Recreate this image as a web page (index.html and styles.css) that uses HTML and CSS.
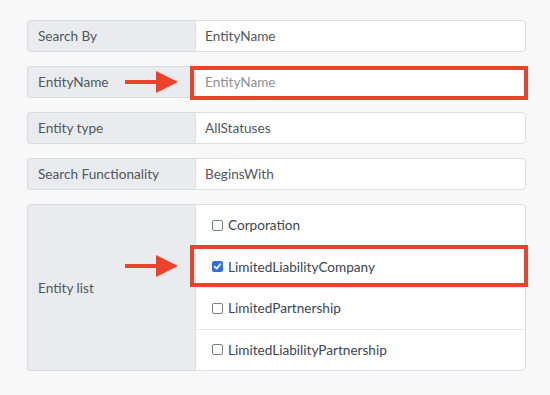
FILE: index.html
```html
<!DOCTYPE html>
<html lang="en">
<head>
  <meta charset="UTF-8" />
  <title>Entity Search</title>
  <link rel="stylesheet" href="styles.css">
</head>
<body>
  <div class="form">
    <div class="row">
      <div class="label">Search By</div>
      <div class="field">EntityName</div>
    </div>

    <div class="row">
      <div class="label">EntityName</div>
      <div class="field placeholder">EntityName</div>
      <div class="arrow arrow-name"></div>
      <div class="mark mark-name"></div>
    </div>

    <div class="row">
      <div class="label">Entity type</div>
      <div class="field">AllStatuses</div>
    </div>

    <div class="row">
      <div class="label">Search Functionality</div>
      <div class="field">BeginsWith</div>
    </div>

    <div class="row row-list">
      <div class="label">Entity list</div>
      <ul class="list">
        <li><span class="box"></span>Corporation</li>
        <li><span class="box checked"><svg viewBox="0 0 11 11" width="11" height="11"><path d="M2.6 5.6 L4.6 7.6 L8.4 3.2" fill="none" stroke="#fff" stroke-width="1.7" stroke-linecap="round" stroke-linejoin="round"/></svg></span>LimitedLiabilityCompany</li>
        <li><span class="box"></span>LimitedPartnership</li>
        <li><span class="box"></span>LimitedLiabilityPartnership</li>
      </ul>
      <div class="arrow arrow-list"></div>
      <div class="mark mark-list"></div>
    </div>
  </div>
</body>
</html>
```

FILE: styles.css
```css
body {
  margin: 0;
  background-color: #f8f8f8;
  font-family: Lato, "Open Sans", sans-serif;
  font-size: 13.6px;
  color: #51575d;
}

.form {
  width: 499px;
  margin-left: 27px;
  padding-top: 20px;
  display: flex;
  flex-direction: column;
  gap: 14px;
}

.row {
  position: relative;
  display: flex;
  height: 32px;
}

.label {
  width: 157px;
  padding-left: 10px;
  display: flex;
  align-items: center;
  background-color: #e9ebee;
  border: 1px solid #d8dbdf;
  border-right: none;
  border-radius: 4px 0 0 4px;
}

.field {
  flex: 1;
  padding-left: 9px;
  display: flex;
  align-items: center;
  background-color: #fff;
  border: 1px solid #dcdfe3;
  border-radius: 0 4px 4px 0;
}

.placeholder {
  color: #8d9196;
}

.row-list {
  height: 167px;
}

.list {
  flex: 1;
  margin: 0;
  padding: 0;
  list-style: none;
  display: flex;
  flex-direction: column;
  background-color: #fff;
  border: 1px solid #dcdfe3;
  border-radius: 0 4px 4px 0;
}

.list li {
  flex: 1;
  display: flex;
  align-items: center;
  padding-left: 16px;
  color: #3d4550;
  border-top: 1px solid #e6e8eb;
}

.list li:first-child {
  border-top: none;
}

.box {
  width: 9px;
  height: 9px;
  margin-right: 5px;
  border: 1px solid #7a7f85;
  border-radius: 2px;
  background-color: #fff;
  display: flex;
}

.box.checked {
  width: 11px;
  height: 11px;
  border: none;
  background-color: #2f6fe4;
}

/* annotation overlays */
.mark {
  position: absolute;
  border: 4px solid #e9432b;
  box-sizing: border-box;
}

.mark-name {
  left: 163px;
  top: 0;
  width: 338px;
  height: 34px;
}

.mark-list {
  left: 163px;
  top: 41px;
  width: 338px;
  height: 42px;
}

.arrow {
  position: absolute;
  left: 98px;
  width: 33px;
  height: 4px;
  background-color: #e9432b;
}

.arrow::after {
  content: "";
  position: absolute;
  left: 31px;
  top: -9px;
  border-left: 22px solid #e9432b;
  border-top: 11px solid transparent;
  border-bottom: 11px solid transparent;
}

.arrow-name {
  top: 14px;
}

.arrow-list {
  top: 60px;
}
```
